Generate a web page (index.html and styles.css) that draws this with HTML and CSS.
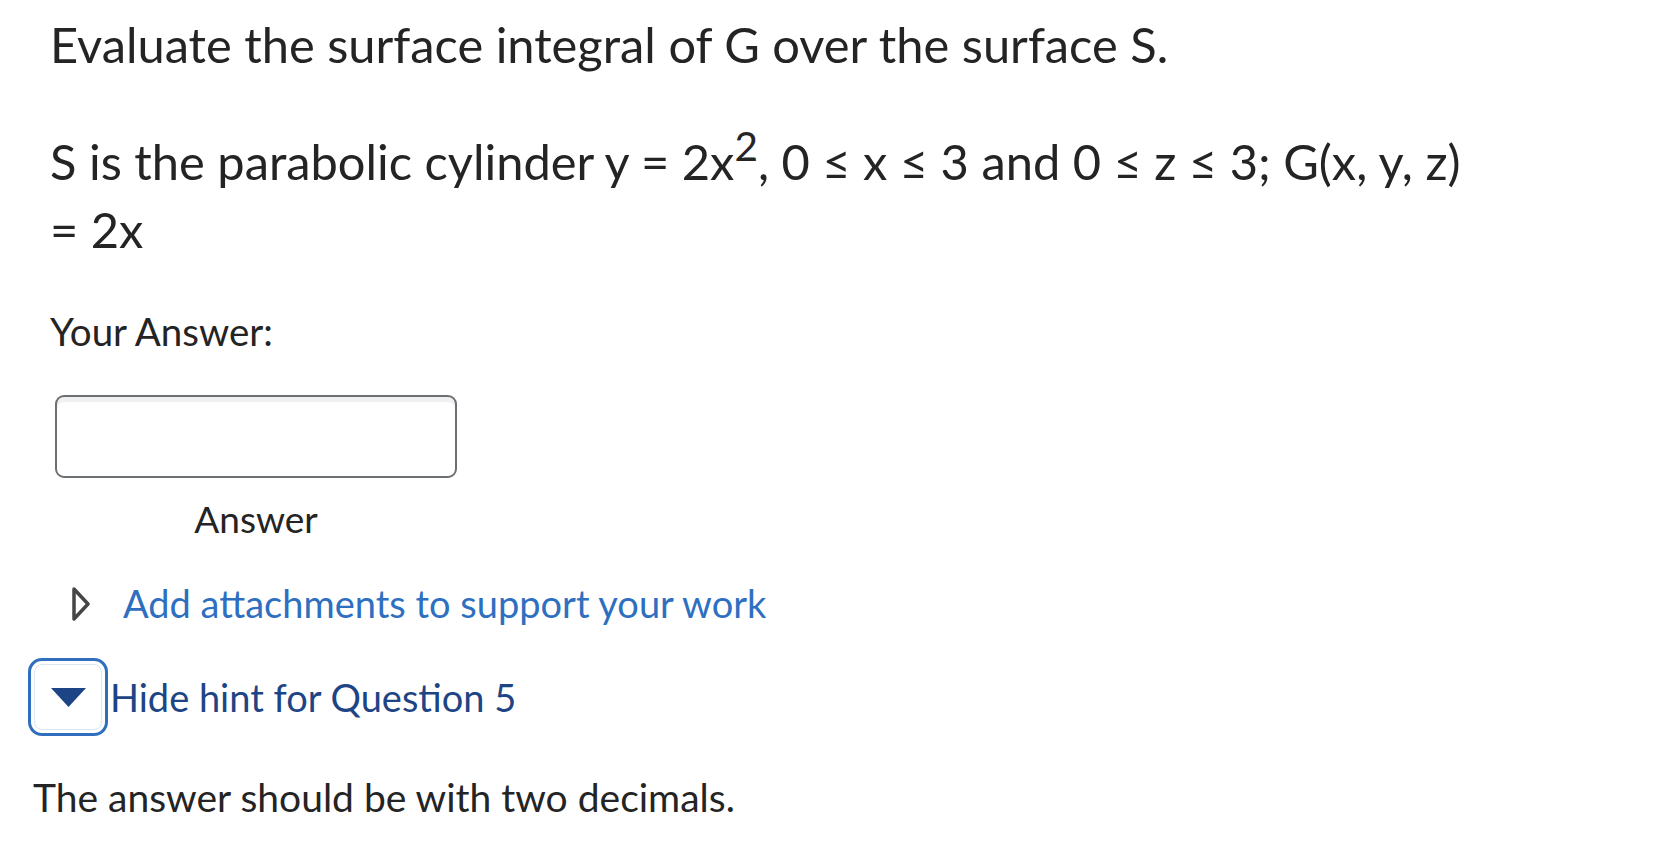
FILE: index.html
```html
<!DOCTYPE html>
<html lang="en">
<head>
  <meta charset="UTF-8">
  <title>Question 5</title>
  <link rel="stylesheet" href="styles.css">
</head>
<body>
  <div class="question">
    <div class="question-text">
      <p>Evaluate the surface integral of G over the surface S.</p>
      <p>S is the parabolic cylinder y = 2x<sup>2</sup>, 0 ≤ x ≤ 3 and 0 ≤ z ≤ 3; G(x, y, z) = 2x</p>
    </div>

    <div class="answer-label">Your Answer:</div>

    <div class="answer-field">
      <input type="text" class="answer-input" aria-label="Answer">
      <span class="answer-caption">Answer</span>
    </div>

    <!-- attachments toggle -->
    <div class="attachments">
      <svg class="caret-right" width="18" height="34" viewBox="0 0 18 34">
        <path d="M2 2 L16 17 L2 32 Z" fill="none" stroke="#454545" stroke-width="3.5" stroke-linejoin="round"/>
      </svg>
      <a href="#attachments">Add attachments to support your work</a>
    </div>
  </div>

  <!-- hint -->
  <div class="hint">
    <button class="hint-toggle" aria-expanded="true">
      <svg width="35" height="19" viewBox="0 0 35 19">
        <path d="M0 0 H35 L17.5 19 Z" fill="#1d4585"/>
      </svg>
    </button>
    <a href="#hint" class="hint-link">Hide hint for Question 5</a>
  </div>
  <p class="hint-text">The answer should be with two decimals.</p>
</body>
</html>
```

FILE: styles.css
```css
/* General */
body {
  margin: 0;
  font-family: 'Lato', 'Noto Sans', sans-serif;
  color: #242424;
  background: #ffffff;
}
a {
  text-decoration: none;
}

/* Question */
.question {
  padding: 10px 0 0 50px;
}
.question-text {
  width: 1440px;
  font-size: 48.8px;
  line-height: 68px;
}
.question-text p {
  margin: 0 0 49px;
}
.question-text p:last-child {
  margin-bottom: 0;
}
.question-text sup {
  font-size: 0.83em;
  line-height: 0;
  vertical-align: 0.47em;
}

/* Answer */
.answer-label {
  margin-top: 40px;
  font-size: 38.5px;
  line-height: 1.5;
}
.answer-field {
  display: inline-flex;
  flex-direction: column;
  align-items: center;
  gap: 13px;
  margin: 34px 0 0 5px;
}
.answer-input {
  box-sizing: border-box;
  width: 402px;
  height: 83px;
  border: 2px solid #6d7073;
  border-radius: 9px;
  box-shadow: inset 0 5px 0 #eef0f2;
  background: #ffffff;
}
.answer-caption {
  font-size: 37px;
  line-height: 1.5;
}

/* Attachments */
.attachments {
  display: flex;
  align-items: center;
  gap: 33px;
  margin: 29px 0 0 22px;
  font-size: 38px;
  line-height: 1.5;
}
.attachments a {
  color: #2e6fbf;
}

/* Hint */
.hint {
  display: flex;
  align-items: center;
  gap: 2px;
  margin: 26px 0 0 28px;
}
.hint-toggle {
  display: flex;
  align-items: center;
  justify-content: center;
  box-sizing: border-box;
  width: 80px;
  height: 78px;
  padding: 0;
  background: #ffffff;
  border: 3px solid #2f6fbd;
  border-radius: 14px;
  outline: 1px solid #dbe6f3;
  outline-offset: -7px;
}
.hint-link {
  color: #1d4585;
  font-size: 38px;
  line-height: 1.5;
}
.hint-text {
  margin: 32px 0 0 33px;
  font-size: 39px;
  line-height: 1.5;
}
```
